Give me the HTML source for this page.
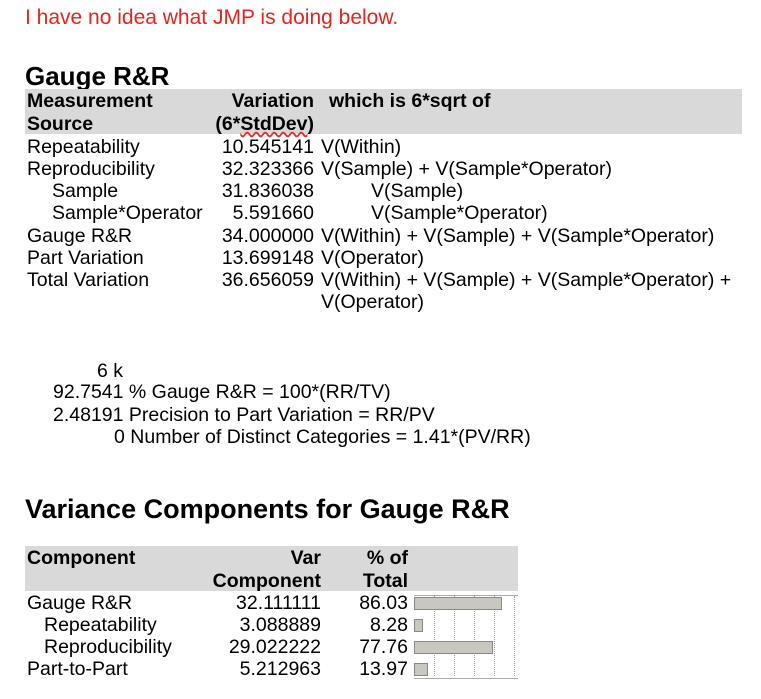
<!DOCTYPE html>
<html><head><style>
body{margin:0;width:761px;height:699px;background:#fff;font-family:"Liberation Sans",Arial,sans-serif;font-size:19.5px;color:#000;position:relative;overflow:hidden}
.a{position:absolute;white-space:nowrap;line-height:22px;margin-top:1px}
.r{text-align:right}
.b{font-weight:bold}
.gray{position:absolute;background:#d9d9d9}
.bar{position:absolute;height:13px;background:#c9c8c0;border:1px solid #888;box-sizing:border-box}
.dl{position:absolute;width:0;border-left:1px dotted #999;top:596px;height:80px}
</style></head><body>
<div class="a" style="left:25px;top:6px;color:#e8231e;font-size:21px">I have no idea what JMP is doing below.</div>
<div class="a b" style="left:25px;top:61px;font-size:26px;line-height:28px">Gauge R&amp;R</div>
<div class="gray" style="left:25px;top:89px;width:717px;height:45px"></div>
<div class="a b" style="left:27px;top:89px">Measurement</div>
<div class="a b" style="left:27px;top:112px">Source</div>
<div class="a b r" style="left:150px;width:164px;top:89px">Variation</div>
<div class="a b r" style="left:150px;width:164px;top:112px">(6*<span style="text-decoration:underline wavy #d33">StdDev</span>)</div>
<div class="a b" style="left:329px;top:89px">which is 6*sqrt of</div>

<div class="a" style="left:27px;top:135px">Repeatability</div>
<div class="a" style="left:27px;top:157px">Reproducibility</div>
<div class="a" style="left:52px;top:179px">Sample</div>
<div class="a" style="left:52px;top:201px">Sample*Operator</div>
<div class="a" style="left:27px;top:224px">Gauge R&amp;R</div>
<div class="a" style="left:27px;top:246px">Part Variation</div>
<div class="a" style="left:27px;top:268px">Total Variation</div>

<div class="a r" style="left:150px;width:164px;top:135px">10.545141</div>
<div class="a r" style="left:150px;width:164px;top:157px">32.323366</div>
<div class="a r" style="left:150px;width:164px;top:179px">31.836038</div>
<div class="a r" style="left:150px;width:164px;top:201px">5.591660</div>
<div class="a r" style="left:150px;width:164px;top:224px">34.000000</div>
<div class="a r" style="left:150px;width:164px;top:246px">13.699148</div>
<div class="a r" style="left:150px;width:164px;top:268px">36.656059</div>

<div class="a" style="left:321px;top:135px">V(Within)</div>
<div class="a" style="left:321px;top:157px">V(Sample) + V(Sample*Operator)</div>
<div class="a" style="left:371px;top:179px">V(Sample)</div>
<div class="a" style="left:371px;top:201px">V(Sample*Operator)</div>
<div class="a" style="left:321px;top:224px">V(Within) + V(Sample) + V(Sample*Operator)</div>
<div class="a" style="left:321px;top:246px">V(Operator)</div>
<div class="a" style="left:321px;top:268px">V(Within) + V(Sample) + V(Sample*Operator) +</div>
<div class="a" style="left:321px;top:290px">V(Operator)</div>

<div class="a" style="left:97px;top:359px">6 k</div>
<div class="a" style="left:53px;top:380px">92.7541 % Gauge R&amp;R = 100*(RR/TV)</div>
<div class="a" style="left:53px;top:403px">2.48191 Precision to Part Variation = RR/PV</div>
<div class="a" style="left:114px;top:425px">0 Number of Distinct Categories = 1.41*(PV/RR)</div>

<div class="a b" style="left:25px;top:494px;font-size:27px;line-height:28px">Variance Components for Gauge R&amp;R</div>
<div class="gray" style="left:25px;top:546px;width:493px;height:45px"></div>
<div class="a b" style="left:27px;top:546px">Component</div>
<div class="a b r" style="left:180px;width:141px;top:546px">Var</div>
<div class="a b r" style="left:180px;width:141px;top:569px">Component</div>
<div class="a b r" style="left:340px;width:68px;top:546px">% of</div>
<div class="a b r" style="left:340px;width:68px;top:569px">Total</div>

<div class="a" style="left:27px;top:591px">Gauge R&amp;R</div>
<div class="a" style="left:44px;top:613px">Repeatability</div>
<div class="a" style="left:44px;top:635px">Reproducibility</div>
<div class="a" style="left:27px;top:657px">Part-to-Part</div>
<div class="a r" style="left:180px;width:141px;top:591px">32.111111</div>
<div class="a r" style="left:180px;width:141px;top:613px">3.088889</div>
<div class="a r" style="left:180px;width:141px;top:635px">29.022222</div>
<div class="a r" style="left:180px;width:141px;top:657px">5.212963</div>
<div class="a r" style="left:340px;width:68px;top:591px">86.03</div>
<div class="a r" style="left:340px;width:68px;top:613px">8.28</div>
<div class="a r" style="left:340px;width:68px;top:635px">77.76</div>
<div class="a r" style="left:340px;width:68px;top:657px">13.97</div>

<div style="position:absolute;left:414px;top:595px;width:104px;border-top:1px solid #aaa"></div>
<div style="position:absolute;left:414px;top:678px;width:104px;border-top:1px solid #aaa"></div>
<div class="dl" style="left:434px"></div>
<div class="dl" style="left:454px"></div>
<div class="dl" style="left:474px"></div>
<div class="dl" style="left:494px"></div>
<div class="dl" style="left:514px"></div>
<div class="bar" style="left:414px;top:597px;width:88px"></div>
<div class="bar" style="left:414px;top:619px;width:9px"></div>
<div class="bar" style="left:414px;top:641px;width:79px"></div>
<div class="bar" style="left:414px;top:663px;width:14px"></div>
</body></html>
